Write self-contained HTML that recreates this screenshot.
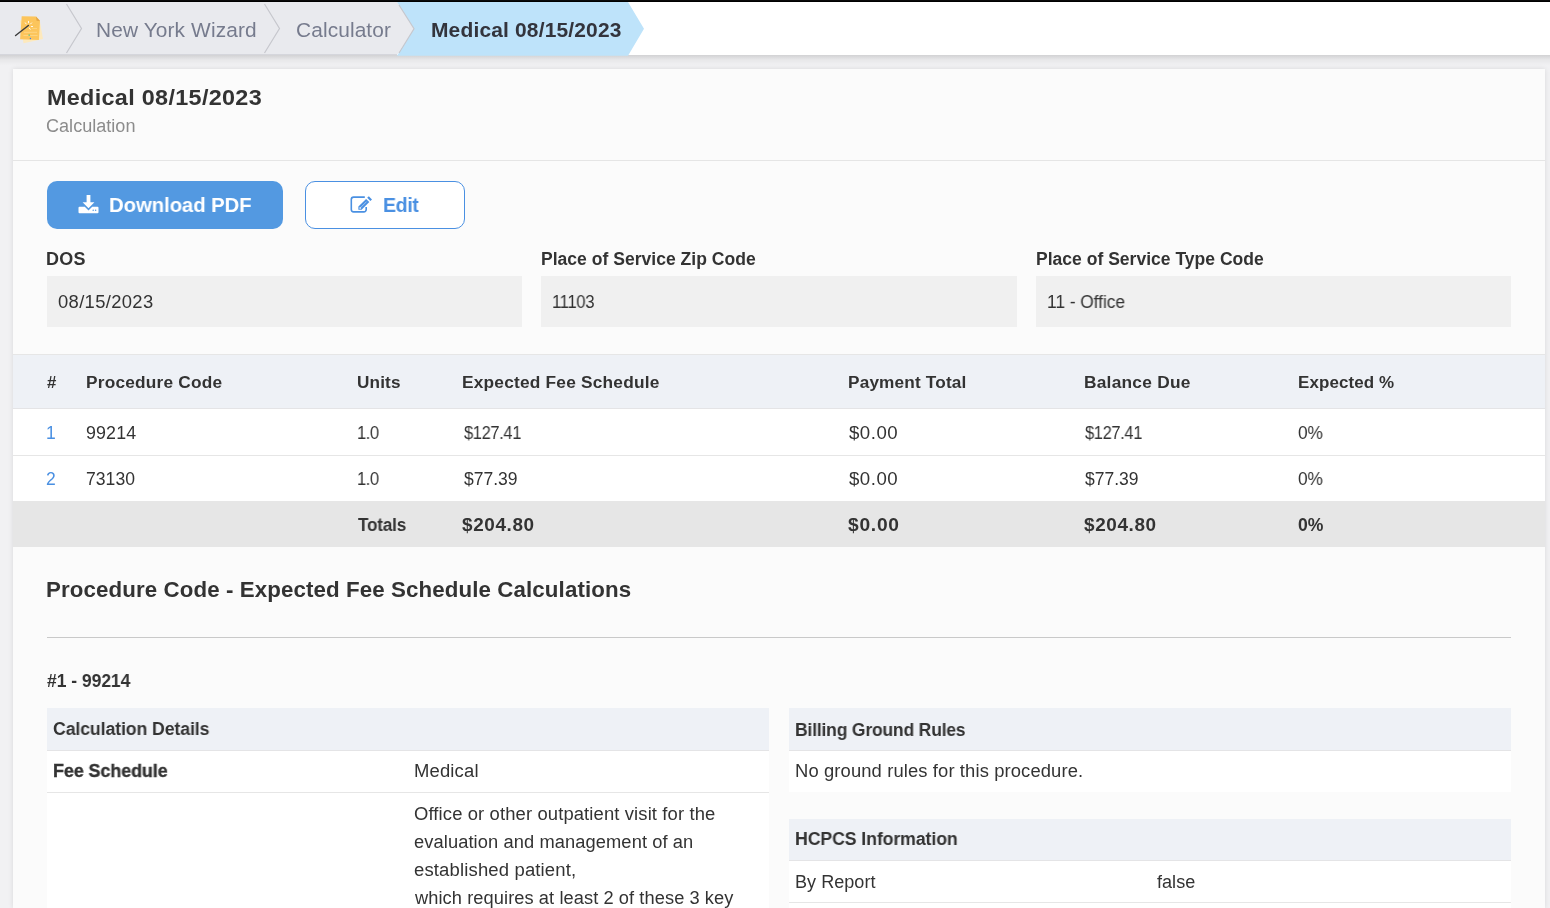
<!DOCTYPE html>
<html><head><meta charset="utf-8"><title>Medical 08/15/2023</title>
<style>
html,body{margin:0;padding:0;}
body{width:1550px;height:908px;overflow:hidden;position:relative;background:#f1f1f3;font-family:"Liberation Sans",sans-serif;}
.t{position:absolute;white-space:nowrap;will-change:transform;}
.r{position:absolute;}
</style></head><body>
<div class="r" style="left:0px;top:0px;width:1550px;height:1px;background:#0a0a0a"></div>
<div class="r" style="left:0px;top:1px;width:1550px;height:1px;background:#000"></div>
<div class="r" style="left:0px;top:2px;width:1550px;height:53px;background:#ffffff"></div>
<div class="r" style="left:0px;top:55px;width:1550px;height:14px;background:linear-gradient(rgba(0,0,0,.13),rgba(0,0,0,.04) 35%,rgba(0,0,0,0) 75%)"></div>
<svg class="r" style="left:0;top:2px" width="700" height="54" viewBox="0 0 700 54">
<polygon points="0,0 397,0 414,26.7 397,53 0,53" fill="#e9eaee"/>
<polygon points="397,0 628,0 644,26.7 628,53.8 397,53.8 414,26.7" fill="#bee3fa"/>
<polyline points="66.5,2 81.5,26.5 66.5,51" fill="none" stroke="#c6c7cd" stroke-width="1.2"/>
<polyline points="264.5,2 279.5,26.5 264.5,51" fill="none" stroke="#c6c7cd" stroke-width="1.2"/>
<polyline points="399,3 414,26.7 399,51" fill="none" stroke="#c6c7cd" stroke-width="1.2"/>
<line x1="0" y1="52.5" x2="397" y2="52.5" stroke="#d5d6dc" stroke-width="1"/>
</svg>
<svg class="r" style="left:10px;top:10px" width="40" height="40" viewBox="0 0 40 40">
<polygon points="10,10.5 29.5,9.5 33,29 13.5,33.2" fill="#fde9bd"/>
<polygon points="11.7,6.2 26,6.6 30,11 28.9,30 10.1,29.3" fill="#fcc55c"/>
<polygon points="26,6.6 30,11 26.6,10.8" fill="#e3a544"/>
<g stroke="#ffe7b0" stroke-width="0.6" opacity="0.8"><line x1="22" y1="18.3" x2="27" y2="18.3"/><line x1="14" y1="22.3" x2="27" y2="22.3"/><line x1="13.5" y1="25.6" x2="27.5" y2="25.6"/></g>
<g stroke="#fff" stroke-width="0.9" stroke-linecap="round"><line x1="18.5" y1="11.3" x2="18.5" y2="12.8"/><line x1="15.3" y1="12.8" x2="16.1" y2="13.9"/><line x1="21.6" y1="12.9" x2="20.6" y2="13.9"/><line x1="21.3" y1="16.5" x2="22.6" y2="16.5"/><line x1="19.3" y1="18" x2="20.2" y2="19.3"/></g>
<line x1="5.6" y1="25.5" x2="18.4" y2="15.5" stroke="#3d3d3d" stroke-width="1.5" stroke-linecap="round"/>
<circle cx="19.2" cy="25.1" r="0.9" fill="#7dc47d"/><circle cx="20.4" cy="28.5" r="0.7" fill="#3b7ff0"/>
</svg>
<div class="r" style="left:13px;top:69px;width:1532px;height:839px;background:#fbfbfb;box-shadow:0 0 5px rgba(0,0,0,.1)"></div>
<div class="r" style="left:13px;top:160px;width:1532px;height:1px;background:#e5e5e5"></div>
<div class="r" style="left:47px;top:181px;width:236px;height:48px;background:#5399e1;border-radius:10px"></div>
<svg class="r" style="left:78px;top:194px" width="22" height="21" viewBox="0 0 22 21">
<path d="M8.6,1 h3.8 v7.2 h4 l-5.9,6 l-5.9,-6 h4 z" fill="#fff"/>
<path d="M1.5,12.8 h5.3 l3.7,3.6 l3.7,-3.6 h5.3 a1,1 0 0 1 1,1 v4.4 a1,1 0 0 1 -1,1 h-18 a1,1 0 0 1 -1,-1 v-4.4 a1,1 0 0 1 1,-1 z" fill="#fff"/>
<circle cx="15.2" cy="16.3" r="0.75" fill="#5399e1"/><circle cx="17.6" cy="16.3" r="0.75" fill="#5399e1"/>
</svg>
<div class="r" style="left:305px;top:181px;width:160px;height:48px;background:#fff;border:1px solid #4a90e2;border-radius:10px;box-sizing:border-box"></div>
<svg class="r" style="left:349px;top:195px" width="24" height="20" viewBox="0 0 24 20">
<path d="M15.8,2.1 H4.6 a2.3,2.3 0 0 0 -2.3,2.3 v10.2 a2.3,2.3 0 0 0 2.3,2.3 h10.3 a2.3,2.3 0 0 0 2.3,-2.3 v-2.6" fill="none" stroke="#4a90e2" stroke-width="1.6"/>
<polygon points="9.4,14.8 9.4,11.6 17.1,3.9 20.3,7.1 12.6,14.8" fill="#4a90e2"/>
<polygon points="18.2,2.8 19.8,1.2 23,4.4 21.4,6" fill="#4a90e2"/>
<line x1="11.6" y1="12.6" x2="17.6" y2="6.6" stroke="#d6e6f9" stroke-width="0.6"/>
<rect x="10.4" y="12.2" width="1.6" height="1.6" fill="#d6e6f9" transform="rotate(45 11.2 13)"/>
</svg>
<div class="r" style="left:47px;top:276px;width:475px;height:51px;background:#f0f0f0"></div>
<div class="r" style="left:541px;top:276px;width:476px;height:51px;background:#f0f0f0"></div>
<div class="r" style="left:1036px;top:276px;width:475px;height:51px;background:#f0f0f0"></div>
<div class="r" style="left:13px;top:354px;width:1532px;height:1px;background:#e6e6e6"></div>
<div class="r" style="left:13px;top:355px;width:1532px;height:53px;background:#eef1f6"></div>
<div class="r" style="left:13px;top:408px;width:1532px;height:1px;background:#e4e4e6"></div>
<div class="r" style="left:13px;top:409px;width:1532px;height:46px;background:#fff"></div>
<div class="r" style="left:13px;top:455px;width:1532px;height:1px;background:#e6e6e6"></div>
<div class="r" style="left:13px;top:456px;width:1532px;height:45px;background:#fff"></div>
<div class="r" style="left:13px;top:501px;width:1532px;height:46px;background:#e6e6e6"></div>
<div class="r" style="left:47px;top:637px;width:1464px;height:1px;background:#c9c9c9"></div>
<div class="r" style="left:47px;top:708px;width:722px;height:42px;background:#eef1f6"></div>
<div class="r" style="left:47px;top:750px;width:722px;height:1px;background:#e4e4e6"></div>
<div class="r" style="left:47px;top:751px;width:722px;height:41px;background:#fff"></div>
<div class="r" style="left:47px;top:792px;width:722px;height:1px;background:#e6e6e6"></div>
<div class="r" style="left:47px;top:793px;width:722px;height:115px;background:#fff"></div>
<div class="r" style="left:789px;top:708px;width:722px;height:42px;background:#eef1f6"></div>
<div class="r" style="left:789px;top:750px;width:722px;height:1px;background:#e4e4e6"></div>
<div class="r" style="left:789px;top:751px;width:722px;height:41px;background:#fff"></div>
<div class="r" style="left:789px;top:819px;width:722px;height:41px;background:#eef1f6"></div>
<div class="r" style="left:789px;top:860px;width:722px;height:1px;background:#e4e4e6"></div>
<div class="r" style="left:789px;top:861px;width:722px;height:41px;background:#fff"></div>
<div class="r" style="left:789px;top:902px;width:722px;height:1px;background:#e6e6e6"></div>
<div class="r" style="left:789px;top:903px;width:722px;height:5px;background:#fff"></div>
<div class="t" style="left:96.26px;top:20px;font-size:20.5px;line-height:20.5px;font-weight:400;color:#767b8d;letter-spacing:0.129px;transform:scaleX(1.0176);transform-origin:0 0;">New York Wizard</div>
<div class="t" style="left:295.88px;top:20px;font-size:20.5px;line-height:20.5px;font-weight:400;color:#767b8d;letter-spacing:0.116px;transform:scaleX(1.0171);transform-origin:0 0;">Calculator</div>
<div class="t" style="left:431.08px;top:20px;font-size:20.5px;line-height:20.5px;font-weight:700;color:#33343c;letter-spacing:0.160px;transform:scaleX(1.0224);transform-origin:0 0;">Medical 08/15/2023</div>
<div class="t" style="left:46.66px;top:87px;font-size:22.5px;line-height:22.5px;font-weight:700;color:#333333;letter-spacing:0.306px;transform:scaleX(1.0390);transform-origin:0 0;">Medical 08/15/2023</div>
<div class="t" style="left:46.40px;top:117px;font-size:18px;line-height:18px;font-weight:400;color:#8c8c8c;letter-spacing:0.016px;transform:scaleX(1.0028);transform-origin:0 0;">Calculation</div>
<div class="t" style="left:109.01px;top:195px;font-size:20.5px;line-height:20.5px;font-weight:700;color:#ffffff;letter-spacing:-0.073px;transform:scaleX(0.9916);transform-origin:0 0;">Download PDF</div>
<div class="t" style="left:383.05px;top:195px;font-size:20.5px;line-height:20.5px;font-weight:700;color:#4a90e2;letter-spacing:-0.400px;transform:scaleX(0.9526);transform-origin:0 0;">Edit</div>
<div class="t" style="left:46.07px;top:251px;font-size:17.5px;line-height:17.5px;font-weight:700;color:#333333;letter-spacing:0.320px;transform:scaleX(1.0267);transform-origin:0 0;">DOS</div>
<div class="t" style="left:541.10px;top:251px;font-size:17.5px;line-height:17.5px;font-weight:700;color:#333333;letter-spacing:0.012px;transform:scaleX(1.0020);transform-origin:0 0;">Place of Service Zip Code</div>
<div class="t" style="left:1035.70px;top:251px;font-size:17.5px;line-height:17.5px;font-weight:700;color:#333333;letter-spacing:0.008px;transform:scaleX(1.0013);transform-origin:0 0;">Place of Service Type Code</div>
<div class="t" style="left:57.65px;top:294px;font-size:17.5px;line-height:17.5px;font-weight:400;color:#333333;letter-spacing:0.324px;transform:scaleX(1.0509);transform-origin:0 0;">08/15/2023</div>
<div class="t" style="left:552.05px;top:294px;font-size:17.5px;line-height:17.5px;font-weight:400;color:#333333;letter-spacing:-0.360px;transform:scaleX(0.9509);transform-origin:0 0;">11103</div>
<div class="t" style="left:1047.11px;top:294px;font-size:17.5px;line-height:17.5px;font-weight:400;color:#333333;letter-spacing:-0.044px;transform:scaleX(0.9914);transform-origin:0 0;">11 - Office</div>
<div class="t" style="left:47.20px;top:375px;font-size:16.75px;line-height:16.75px;font-weight:700;color:#333333;">#</div>
<div class="t" style="left:86.37px;top:375px;font-size:16.75px;line-height:16.75px;font-weight:700;color:#333333;letter-spacing:0.200px;transform:scaleX(1.0305);transform-origin:0 0;">Procedure Code</div>
<div class="t" style="left:357.38px;top:375px;font-size:16.75px;line-height:16.75px;font-weight:700;color:#333333;letter-spacing:0.160px;transform:scaleX(1.0240);transform-origin:0 0;">Units</div>
<div class="t" style="left:462.47px;top:375px;font-size:16.75px;line-height:16.75px;font-weight:700;color:#333333;letter-spacing:0.200px;transform:scaleX(1.0324);transform-origin:0 0;">Expected Fee Schedule</div>
<div class="t" style="left:847.97px;top:375px;font-size:16.75px;line-height:16.75px;font-weight:700;color:#333333;letter-spacing:0.167px;transform:scaleX(1.0270);transform-origin:0 0;">Payment Total</div>
<div class="t" style="left:1083.97px;top:375px;font-size:16.75px;line-height:16.75px;font-weight:700;color:#333333;letter-spacing:0.228px;transform:scaleX(1.0345);transform-origin:0 0;">Balance Due</div>
<div class="t" style="left:1297.79px;top:375px;font-size:16.75px;line-height:16.75px;font-weight:700;color:#333333;letter-spacing:0.089px;transform:scaleX(1.0129);transform-origin:0 0;">Expected %</div>
<div class="t" style="left:46.20px;top:425px;font-size:17.5px;line-height:17.5px;font-weight:400;color:#4a90e2;">1</div>
<div class="t" style="left:86.38px;top:425px;font-size:17.5px;line-height:17.5px;font-weight:400;color:#333333;letter-spacing:0.140px;transform:scaleX(1.0179);transform-origin:0 0;">99214</div>
<div class="t" style="left:357.46px;top:425px;font-size:17.5px;line-height:17.5px;font-weight:400;color:#333333;letter-spacing:-0.460px;transform:scaleX(0.9400);transform-origin:0 0;">1.0</div>
<div class="t" style="left:463.50px;top:425px;font-size:17.5px;line-height:17.5px;font-weight:400;color:#333333;letter-spacing:-0.400px;transform:scaleX(0.9419);transform-origin:0 0;">$127.41</div>
<div class="t" style="left:849.00px;top:425px;font-size:17.5px;line-height:17.5px;font-weight:400;color:#333333;letter-spacing:0.470px;transform:scaleX(1.0656);transform-origin:0 0;">$0.00</div>
<div class="t" style="left:1085.00px;top:425px;font-size:17.5px;line-height:17.5px;font-weight:400;color:#333333;letter-spacing:-0.400px;transform:scaleX(0.9419);transform-origin:0 0;">$127.41</div>
<div class="t" style="left:1297.81px;top:425px;font-size:17.5px;line-height:17.5px;font-weight:400;color:#333333;letter-spacing:-0.200px;transform:scaleX(0.9875);transform-origin:0 0;">0%</div>
<div class="t" style="left:46.40px;top:471px;font-size:17.5px;line-height:17.5px;font-weight:400;color:#4a90e2;">2</div>
<div class="t" style="left:86.40px;top:471px;font-size:17.5px;line-height:17.5px;font-weight:400;color:#333333;letter-spacing:0.030px;transform:scaleX(1.0038);transform-origin:0 0;">73130</div>
<div class="t" style="left:357.46px;top:471px;font-size:17.5px;line-height:17.5px;font-weight:400;color:#333333;letter-spacing:-0.460px;transform:scaleX(0.9400);transform-origin:0 0;">1.0</div>
<div class="t" style="left:463.50px;top:471px;font-size:17.5px;line-height:17.5px;font-weight:400;color:#333333;">$77.39</div>
<div class="t" style="left:849.00px;top:471px;font-size:17.5px;line-height:17.5px;font-weight:400;color:#333333;letter-spacing:0.470px;transform:scaleX(1.0656);transform-origin:0 0;">$0.00</div>
<div class="t" style="left:1085.00px;top:471px;font-size:17.5px;line-height:17.5px;font-weight:400;color:#333333;">$77.39</div>
<div class="t" style="left:1297.81px;top:471px;font-size:17.5px;line-height:17.5px;font-weight:400;color:#333333;letter-spacing:-0.200px;transform:scaleX(0.9875);transform-origin:0 0;">0%</div>
<div class="t" style="left:358.40px;top:517px;font-size:17.5px;line-height:17.5px;font-weight:700;color:#333333;letter-spacing:-0.160px;transform:scaleX(0.9755);transform-origin:0 0;">Totals</div>
<div class="t" style="left:462.42px;top:517px;font-size:17.5px;line-height:17.5px;font-weight:700;color:#333333;letter-spacing:0.560px;transform:scaleX(1.0813);transform-origin:0 0;">$204.80</div>
<div class="t" style="left:847.90px;top:517px;font-size:17.5px;line-height:17.5px;font-weight:700;color:#333333;letter-spacing:0.680px;transform:scaleX(1.0971);transform-origin:0 0;">$0.00</div>
<div class="t" style="left:1083.92px;top:517px;font-size:17.5px;line-height:17.5px;font-weight:700;color:#333333;letter-spacing:0.560px;transform:scaleX(1.0813);transform-origin:0 0;">$204.80</div>
<div class="t" style="left:1297.79px;top:517px;font-size:17.5px;line-height:17.5px;font-weight:700;color:#333333;letter-spacing:0.080px;transform:scaleX(1.0050);transform-origin:0 0;">0%</div>
<div class="t" style="left:46.19px;top:579px;font-size:22px;line-height:22px;font-weight:700;color:#333333;letter-spacing:0.102px;transform:scaleX(1.0135);transform-origin:0 0;">Procedure Code - Expected Fee Schedule Calculations</div>
<div class="t" style="left:47.20px;top:673px;font-size:17.5px;line-height:17.5px;font-weight:700;color:#333333;letter-spacing:-0.013px;transform:scaleX(0.9979);transform-origin:0 0;">#1 - 99214</div>
<div class="t" style="left:52.62px;top:720px;font-size:18px;line-height:18px;font-weight:700;color:#333333;letter-spacing:-0.102px;transform:scaleX(0.9826);transform-origin:0 0;">Calculation Details</div>
<div class="t" style="left:52.61px;top:762px;font-size:18px;line-height:18px;font-weight:700;color:#333333;letter-spacing:-0.051px;transform:scaleX(0.9927);transform-origin:0 0;-webkit-text-stroke:0.35px #333333;">Fee Schedule</div>
<div class="t" style="left:414.28px;top:762px;font-size:18px;line-height:18px;font-weight:400;color:#333333;letter-spacing:0.160px;transform:scaleX(1.0240);transform-origin:0 0;">Medical</div>
<div class="t" style="left:414.18px;top:805px;font-size:18px;line-height:18px;font-weight:400;color:#333333;letter-spacing:0.116px;transform:scaleX(1.0235);transform-origin:0 0;">Office or other outpatient visit for the</div>
<div class="t" style="left:414.18px;top:833px;font-size:18px;line-height:18px;font-weight:400;color:#333333;letter-spacing:0.093px;transform:scaleX(1.0156);transform-origin:0 0;">evaluation and management of an</div>
<div class="t" style="left:414.17px;top:861px;font-size:18px;line-height:18px;font-weight:400;color:#333333;letter-spacing:0.145px;transform:scaleX(1.0272);transform-origin:0 0;">established patient,</div>
<div class="t" style="left:415.20px;top:889px;font-size:18px;line-height:18px;font-weight:400;color:#333333;letter-spacing:0.074px;transform:scaleX(1.0139);transform-origin:0 0;">which requires at least 2 of these 3 key</div>
<div class="t" style="left:794.83px;top:721px;font-size:18px;line-height:18px;font-weight:700;color:#333333;letter-spacing:-0.177px;transform:scaleX(0.9715);transform-origin:0 0;">Billing Ground Rules</div>
<div class="t" style="left:794.78px;top:762px;font-size:18px;line-height:18px;font-weight:400;color:#333333;letter-spacing:0.116px;transform:scaleX(1.0215);transform-origin:0 0;">No ground rules for this procedure.</div>
<div class="t" style="left:794.82px;top:830px;font-size:18px;line-height:18px;font-weight:700;color:#333333;letter-spacing:-0.107px;transform:scaleX(0.9844);transform-origin:0 0;">HCPCS Information</div>
<div class="t" style="left:794.80px;top:873px;font-size:18px;line-height:18px;font-weight:400;color:#333333;letter-spacing:0.020px;transform:scaleX(1.0030);transform-origin:0 0;">By Report</div>
<div class="t" style="left:1157.00px;top:873px;font-size:18px;line-height:18px;font-weight:400;color:#333333;letter-spacing:0.020px;transform:scaleX(1.0032);transform-origin:0 0;">false</div>
</body></html>
